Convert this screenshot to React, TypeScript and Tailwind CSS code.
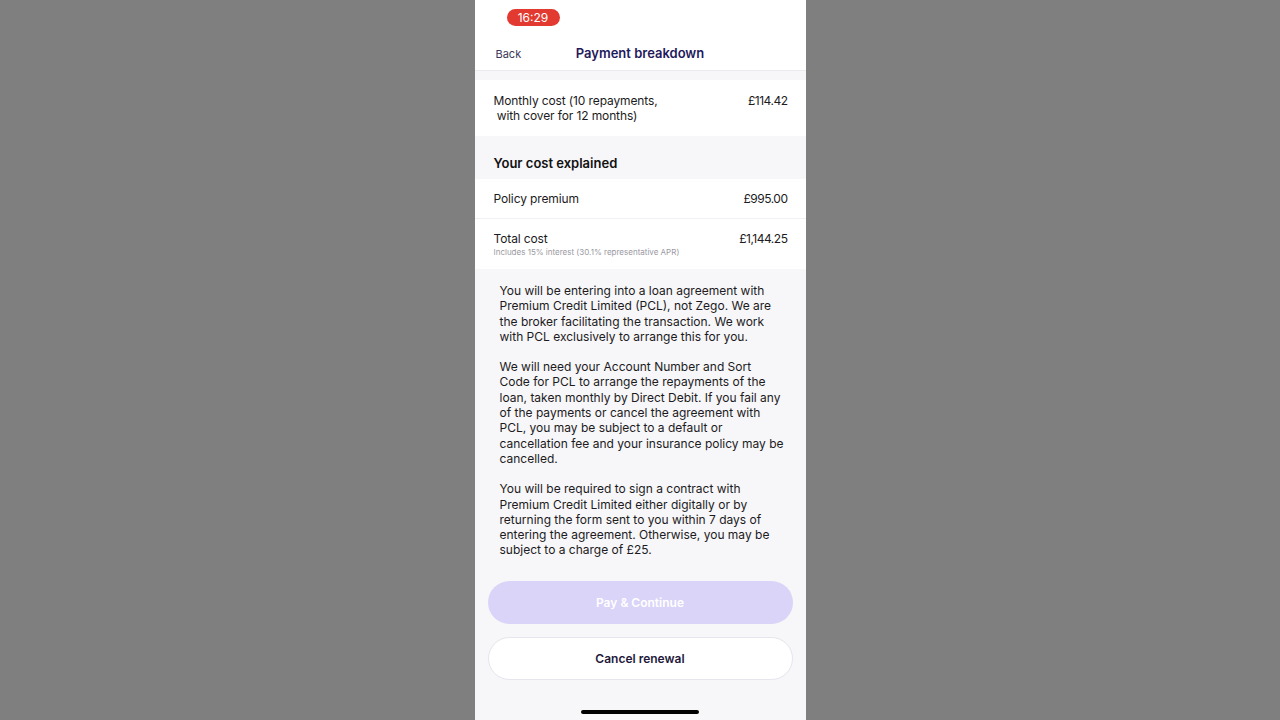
import React from "react";

const font = { fontFamily: "Inter, 'Noto Sans', sans-serif" };

const Row = ({ label, value, sub }: { label: React.ReactNode; value: string; sub?: string }) => (
  <div className="flex justify-between items-start px-[19px] pr-[18px]">
    <div>
      <div className="text-[12px] leading-[15px] text-[#1c1b22] tracking-[-0.01em]">{label}</div>
      {sub && <div className="text-[8px] leading-[12px] text-[#9a99a2]">{sub}</div>}
    </div>
    <div className="text-[12px] leading-[15px] text-[#1c1b22] tracking-[-0.04em]">{value}</div>
  </div>
);

const paragraphs = [
  [
    "You will be entering into a loan agreement with",
    "Premium Credit Limited (PCL), not Zego. We are",
    "the broker facilitating the transaction. We work",
    "with PCL exclusively to arrange this for you.",
  ],
  [
    "We will need your Account Number and Sort",
    "Code for PCL to arrange the repayments of the",
    "loan, taken monthly by Direct Debit. If you fail any",
    "of the payments or cancel the agreement with",
    "PCL, you may be subject to a default or",
    "cancellation fee and your insurance policy may be",
    "cancelled.",
  ],
  [
    "You will be required to sign a contract with",
    "Premium Credit Limited either digitally or by",
    "returning the form sent to you within 7 days of",
    "entering the agreement. Otherwise, you may be",
    "subject to a charge of £25.",
  ],
];

export default function App() {
  return (
    <div className="w-full h-[720px] bg-[#7f7f7f] flex justify-center" style={font}>
      <div className="w-[331px] h-[720px] bg-[#f7f6f9] flex flex-col">
        {/* status bar */}
        <div className="bg-white h-[36px] pt-[9px] pl-[32px]">
          <div className="w-[53px] h-[17px] rounded-full bg-[#e23a30] text-white text-[12px] leading-[17px] text-center">
            16:29
          </div>
        </div>
        {/* nav */}
        <div className="bg-white h-[35px] pt-[2px] flex items-center relative border-b border-[#ebeaee]">
          <span className="pl-[21px] text-[11px] text-[#3b3a5c]">Back</span>
          <span className="absolute left-0 right-0 text-center text-[13px] font-semibold text-[#1f1a5c] pointer-events-none">
            Payment breakdown
          </span>
        </div>
        <div className="h-[9px]" />
        <div className="bg-white pl-[19px] pr-[18px] pt-[13px] pb-[13px] flex justify-between">
          <div className="text-[12px] leading-[15px] text-[#1c1b22] tracking-[-0.01em]">
            Monthly cost (10 repayments,
            <br />
            &nbsp;with cover for 12 months)
          </div>
          <div className="text-[12px] leading-[15px] text-[#1c1b22] tracking-[-0.04em]">£114.42</div>
        </div>
        <div className="h-[43px] px-[19px] pt-[18px] text-[13px] font-semibold text-[#111]">
          Your cost explained
        </div>
        <div className="pt-[12px] pb-[12px] bg-white border-b border-[#f0eff3]">
          <Row label="Policy premium" value="£995.00" />
        </div>
        <div className="pt-[12px] pb-[11px] bg-white">
          <Row label="Total cost" value="£1,144.25" sub="Includes 15% interest (30.1% representative APR)" />
        </div>
        <div className="pl-[25px] pr-[10px] pt-[14px] text-[12px] leading-[15.3px] text-[#1c1b22] flex flex-col gap-[15px]">
          {paragraphs.map((lines, i) => (
            <p key={i}>
              {lines.map((l, j) => (
                <span key={j} className="block whitespace-nowrap">
                  {l}
                </span>
              ))}
            </p>
          ))}
        </div>
        <div className="flex-1" />
        <div className="px-[13px] flex flex-col gap-[13px]">
          <button className="h-[43px] rounded-full bg-[#d9d4f8] text-white text-[12px] font-semibold">
            Pay &amp; Continue
          </button>
          <button className="h-[43px] rounded-full bg-white border border-[#e6e4ec] text-[#1f1a3c] text-[12px] font-semibold">
            Cancel renewal
          </button>
        </div>
        <div className="h-[40px] flex items-end justify-center pb-[6px]">
          <div className="w-[118px] h-[4px] rounded-full bg-black" />
        </div>
      </div>
    </div>
  );
}
